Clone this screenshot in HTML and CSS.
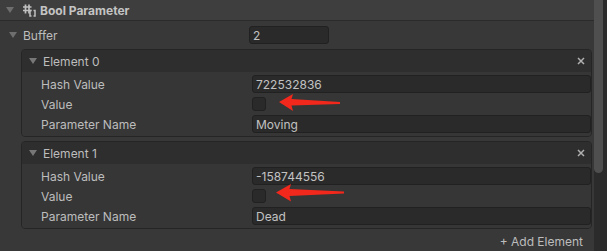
FILE: index.html
```html
<!DOCTYPE html>
<html lang="en">
<head>
    <meta charset="UTF-8" />
    <title>Bool Parameter</title>
    <link rel="stylesheet" href="styles.css">
</head>
<body>

    <div class="inspector">
        <!-- Component header -->
        <div class="comp-header">
            <span class="fold open"></span>
            <svg class="comp-icon" width="14" height="13" viewBox="0 0 14 13">
                <path d="M3.5 0.5v9M7 0.5v9M1 3h8.5M1 6.5h8.5" stroke="#c0c0c0" stroke-width="1.7" fill="none"/>
                <path d="M9.5 6.5h-1.5v5.5h1.5M11.5 6.5h1.5v5.5h-1.5" stroke="#c0c0c0" stroke-width="1.5" fill="none"/>
            </svg>
            <span class="comp-title">Bool Parameter</span>
        </div>

        <div class="prop-row buffer-row">
            <span class="fold open"></span>
            <span class="label">Buffer</span>
            <div class="field short">2</div>
        </div>

        <div class="list">
            <div class="element">
                <div class="el-header">
                    <span class="fold open small"></span>
                    <span class="el-title">Element 0</span>
                    <svg class="remove" width="8" height="8" viewBox="0 0 8 8">
                        <path d="M1 1l6 6M7 1l-6 6" stroke="#b0b0b0" stroke-width="1.5"/>
                    </svg>
                </div>
                <div class="el-body">
                    <div class="el-row">
                        <span class="label">Hash Value</span>
                        <div class="field">722532836</div>
                    </div>
                    <div class="el-row">
                        <span class="label">Value</span>
                        <div class="checkbox"></div>
                    </div>
                    <div class="el-row">
                        <span class="label">Parameter Name</span>
                        <div class="field">Moving</div>
                    </div>
                </div>
            </div>

            <div class="element">
                <div class="el-header">
                    <span class="fold open small"></span>
                    <span class="el-title">Element 1</span>
                    <svg class="remove" width="8" height="8" viewBox="0 0 8 8">
                        <path d="M1 1l6 6M7 1l-6 6" stroke="#b0b0b0" stroke-width="1.5"/>
                    </svg>
                </div>
                <div class="el-body">
                    <div class="el-row">
                        <span class="label">Hash Value</span>
                        <div class="field">-158744556</div>
                    </div>
                    <div class="el-row">
                        <span class="label">Value</span>
                        <div class="checkbox"></div>
                    </div>
                    <div class="el-row">
                        <span class="label">Parameter Name</span>
                        <div class="field">Dead</div>
                    </div>
                </div>
            </div>

            <div class="add-row">+ Add Element</div>
        </div>

        <!-- red annotation arrows -->
        <svg class="mark mark-0" width="64" height="20" viewBox="0 0 64 20">
            <path d="M0 8 L14 0 L12.5 5 L61 8 L61 10 L12.5 11.5 L14 17 Z" fill="#f2281c"/>
        </svg>
        <svg class="mark mark-1" width="70" height="20" viewBox="0 0 70 20">
            <path d="M0 8.5 L15 0 L13.5 5 L68 7.5 L68 9.5 L13.5 12 L15 17.5 Z" fill="#f2281c"/>
        </svg>
    </div>

    <div class="scrollbar">
        <div class="thumb"></div>
    </div>

</body>
</html>
```

FILE: styles.css
```css
* {
    margin: 0;
    padding: 0;
    box-sizing: border-box;
}

body {
    width: 607px;
    height: 251px;
    overflow: hidden;
    display: flex;
    background: #383838;
    color: #bdbdbd;
    font-family: Inter, "Noto Sans", sans-serif;
    font-size: 12px;
}

.inspector {
    position: relative;
    width: 594px;
}

/* header of the component */
.comp-header {
    height: 21px;
    display: flex;
    align-items: center;
    background: #3e3e3e;
    border-bottom: 1px solid #2b2b2b;
    padding-left: 6px;
}

.comp-icon {
    margin-left: 8px;
    margin-right: 4px;
}

.comp-title {
    font-weight: bold;
    color: #c4c4c4;
}

/* foldout triangles */
.fold {
    width: 0;
    height: 0;
    border-left: 4px solid transparent;
    border-right: 4px solid transparent;
    border-top: 6px solid #6e6e6e;
}

.fold.small {
    border-top-color: #777;
}

.prop-row {
    display: flex;
    align-items: center;
    height: 18px;
}

.buffer-row {
    margin-top: 5px;
    padding-left: 9px;
}

.buffer-row .label {
    margin-left: 6px;
    width: 226px;
}

.field {
    height: 18px;
    line-height: 17px;
    background: #2a2a2a;
    border: 1px solid #212121;
    border-radius: 3px;
    padding-left: 3px;
    color: #c2c2c2;
    flex: 1;
}

.field.short {
    flex: 0 0 80px;
}

/* list of elements */
.list {
    margin: 5px 2px 0 21px;
}

.element {
    border: 1px solid #252525;
    border-radius: 4px;
    overflow: hidden;
    margin-bottom: 4px;
}

.el-header {
    height: 22px;
    display: flex;
    align-items: center;
    background: #2e2e2e;
    padding-left: 7px;
    padding-right: 6px;
}

.el-title {
    margin-left: 6px;
    flex: 1;
}

.el-body {
    background: #363636;
    padding: 1px 0 3px 19px;
}

.el-row {
    display: flex;
    align-items: center;
    height: 18px;
    margin-top: 2px;
}

.el-row .label {
    width: 211px;
}

.checkbox {
    width: 14px;
    height: 14px;
    background: #2a2a2a;
    border: 1px solid #212121;
    border-radius: 3px;
}

.add-row {
    text-align: right;
    padding-right: 9px;
    height: 18px;
    line-height: 18px;
}

.mark {
    position: absolute;
}

.mark-0 {
    left: 279px;
    top: 94px;
}

.mark-1 {
    left: 276px;
    top: 184px;
}

.scrollbar {
    width: 13px;
    background: #2b2b2b;
}

.thumb {
    width: 9px;
    height: 173px;
    background: #4f4f4f;
    border-radius: 0 0 5px 5px;
}
```
